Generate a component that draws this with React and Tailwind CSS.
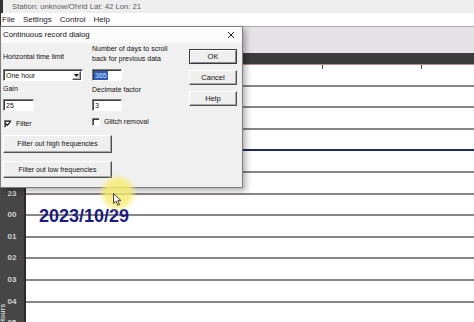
import React from 'react';

const HOURS = ['18', '19', '20', '21', '22', '23', '00', '01', '02', '03', '04', '05'];

const raised =
  'border border-t-white border-l-white border-r-[#505050] border-b-[#505050] shadow-[inset_-1px_-1px_0_#a8a8a8] bg-[#efefef]';
const sunken =
  'border border-t-[#7a7a7a] border-l-[#7a7a7a] border-r-white border-b-white shadow-[inset_1px_1px_0_#3c3c3c] bg-white';

function Check({ checked }) {
  return (
    <div className={`flex h-[8px] w-[8px] items-center justify-center ${sunken}`}>
      {checked && (
        <svg width="6" height="6" viewBox="0 0 6 6">
          <path d="M0.8 2.6 L2.4 4.3 L5.3 0.9" fill="none" stroke="#111" strokeWidth="1.3" />
        </svg>
      )}
    </div>
  );
}

function Dialog() {
  return (
    <div className="absolute left-0 top-[26px] flex h-[162px] w-[243px] flex-col border border-[#7c7c7c] bg-[#f0f0f0] text-[7px] leading-[10px] text-[#111] shadow-[3px_3px_6px_rgba(0,0,0,0.3)]">
      <div className="flex h-[16px] shrink-0 items-center justify-between bg-[#fbfbfb] pl-[2px] pr-[7px]">
        <span className="text-[7.8px] font-medium">Continuous record dialog</span>
        <svg width="8" height="8" viewBox="0 0 8 8">
          <path d="M1 1 L7 7 M7 1 L1 7" stroke="#222" strokeWidth="1" />
        </svg>
      </div>
      <div className="flex flex-1 pl-[2px]">
        <div className="flex w-[186px] flex-col">
          <div className="flex">
            <div className="flex w-[89px] flex-col">
              <span className="mt-[9px] h-[10px]">Horizontal time limit</span>
              <div className={`mt-[7px] flex h-[12px] w-[80px] items-center justify-between ${sunken}`}>
                <span className="pl-[2px] leading-[9px]">One hour</span>
                <div className={`mr-[1px] flex h-[9px] w-[9px] items-center justify-center ${raised}`}>
                  <svg width="5" height="3" viewBox="0 0 5 3">
                    <path d="M0 0 L5 0 L2.5 3 Z" fill="#111" />
                  </svg>
                </div>
              </div>
              <span className="mt-[3px] h-[10px]">Gain</span>
              <div className={`mt-[5px] flex h-[12px] w-[31px] items-center pl-[2px] leading-[9px] ${sunken}`}>25</div>
            </div>
            <div className="flex flex-col">
              <span className="mt-[1px]">
                Number of days to scroll
                <br />
                back for previous data
              </span>
              <div className={`mt-[5px] flex h-[12px] w-[30px] items-center pl-[1px] ${sunken}`}>
                <span className="bg-[#2a5bb8] px-[1px] leading-[9px] text-[#d8e4ff]">365</span>
              </div>
              <span className="mt-[4px] h-[10px]">Decimate factor</span>
              <div className={`mt-[4px] flex h-[12px] w-[30px] items-center pl-[2px] leading-[9px] ${sunken}`}>3</div>
            </div>
          </div>
          <div className="flex h-[24px] items-start">
            <div className="mt-[8px] flex h-[10px] w-[89px] items-center gap-[4px] pl-[1px]">
              <Check checked />
              <span>Filter</span>
            </div>
            <div className="mt-[6px] flex h-[10px] items-center gap-[4px]">
              <Check />
              <span>Glitch removal</span>
            </div>
          </div>
          <button className={`flex h-[18px] w-[109px] items-center justify-center text-[7px] ${raised}`}>
            Filter out high frequencies
          </button>
          <button className={`mt-[8px] flex h-[17px] w-[109px] items-center justify-center text-[7px] ${raised}`}>
            Filter out low frequencies
          </button>
        </div>
        <div className="flex w-[48px] flex-col gap-[6px] pt-[6px] text-[7.5px]">
          <button className="flex h-[15px] items-center justify-center border border-[#3a3a3a] bg-[#efefef] shadow-[inset_1px_1px_0_#fff,inset_-1px_-1px_0_#8a8a8a]">
            OK
          </button>
          <button className={`flex h-[15px] items-center justify-center ${raised}`}>Cancel</button>
          <button className={`flex h-[15px] items-center justify-center ${raised}`}>Help</button>
        </div>
      </div>
    </div>
  );
}

export default function App() {
  return (
    <div className="relative h-[322px] w-[474px] overflow-hidden bg-white font-['Liberation_Sans',Arial,sans-serif]">
      <div className="flex h-[13px] items-center bg-[#eeeeee]">
        <div className="h-full w-[3px] bg-[#333]" />
        <span className="ml-[9px] text-[7.7px] text-[#5c5c5c]">Station: unknow/Ohrid Lat: 42 Lon: 21</span>
      </div>
      <div className="flex h-[13px] items-center gap-[8px] border-l border-[#333] pl-[1px] text-[8px] text-[#222]">
        <span>File</span>
        <span>Settings</span>
        <span>Control</span>
        <span>Help</span>
      </div>
      <div className="h-[27px] border-t border-[#a9a9a9] bg-[#e5e3e5]" />
      <div className="h-[12px] border-b border-[#b48c8c] bg-[#3b3a3d]" />
      <div className="flex h-[257px]">
        <div className="relative flex w-[26px] shrink-0 flex-col border-r-2 border-[#2b2b2b] bg-[#464646] pt-[9.8px]">
          {HOURS.map((h) => (
            <div key={h} className="flex h-[21.6px] shrink-0 items-center justify-center text-[8px] font-bold text-[#d2d2d2]">
              {h}
            </div>
          ))}
          <span className="absolute left-[-7px] top-[245px] -rotate-90 text-[7px] font-bold leading-[8px] text-[#cfcfcf]">
            Hours
          </span>
        </div>
        <div className="relative flex flex-1 flex-col">
          {HOURS.map((h, i) => (
            <div
              key={h}
              className={`h-[21.6px] shrink-0 border-b-2 ${i === 3 ? 'border-[#242a5e]' : 'border-[#8a8686]'}`}
            />
          ))}
          <div className="absolute left-[296px] top-0 h-[4px] w-px bg-[#555]" />
          <div className="absolute left-[395px] top-0 h-[4px] w-px bg-[#555]" />
        </div>
      </div>

      <Dialog />

      <div className="absolute left-[39px] top-[207px] text-[18px] font-bold leading-none text-[#1b1b80]">2023/10/29</div>

      <div className="pointer-events-none absolute left-[99px] top-[174px] h-[38px] w-[38px] rounded-full bg-[radial-gradient(circle,rgba(248,236,110,0.8)_45%,rgba(248,236,110,0)_72%)]" />
      <svg className="absolute left-[113px] top-[193px]" width="9" height="14" viewBox="0 0 9 14">
        <path d="M0.5 0.5 L0.5 10.5 L3 8.2 L4.8 12.4 L6.5 11.6 L4.8 7.6 L8 7.6 Z" fill="#f4f4f4" stroke="#333" strokeWidth="0.9" />
      </svg>
    </div>
  );
}
